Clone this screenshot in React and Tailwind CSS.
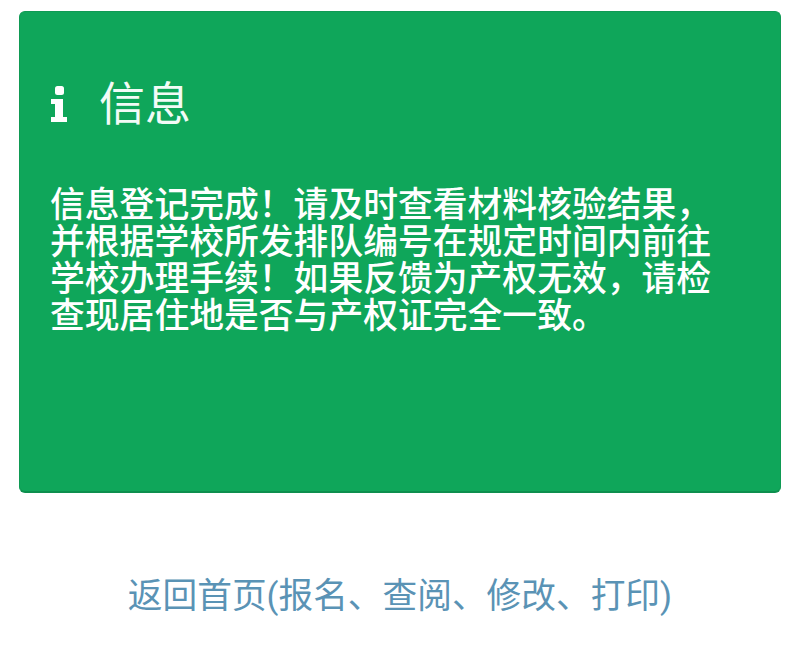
export default function App() {
  return (
    <div className="w-[800px] h-[657px] bg-white overflow-hidden font-['Roboto','Noto_Sans_CJK_SC',sans-serif]">
      <div className="pt-[11px] px-[19px]">
        <div className="h-[482px] bg-[#0fa65a] rounded-[6px] border border-[#0f9a54] border-b-2 border-b-[#0d8f4e] pl-[30px] pr-[19px] pt-[59px] text-white">
          <div className="flex items-center h-[66px]">
            <span className="w-[18px] flex justify-center">
              <svg width="18" height="38" viewBox="0 0 18 38">
                <rect x="5" y="1" width="9" height="9" rx="2.5" fill="#fff" />
                <path d="M1 14h12v18h4v5H1v-5h4V19H1z" fill="#fff" />
              </svg>
            </span>
            <span className="ml-[31px] text-[46px] leading-[66px] text-[#f2fbf6]">信息</span>
          </div>
          <div className="mt-[50px] text-[34.8px] leading-[37px] font-medium">
            <div className="whitespace-nowrap">信息登记完成！请及时查看材料核验结果，</div>
            <div className="whitespace-nowrap">并根据学校所发排队编号在规定时间内前往</div>
            <div className="whitespace-nowrap">学校办理手续！如果反馈为产权无效，请检</div>
            <div className="whitespace-nowrap">查现居住地是否与产权证完全一致。</div>
          </div>
        </div>
        <div className="mt-[76px] text-center text-[34.7px] leading-[54px] text-[#5a93b5] whitespace-nowrap">返回首页(报名、查阅、修改、打印)</div>
      </div>
    </div>
  );
}
